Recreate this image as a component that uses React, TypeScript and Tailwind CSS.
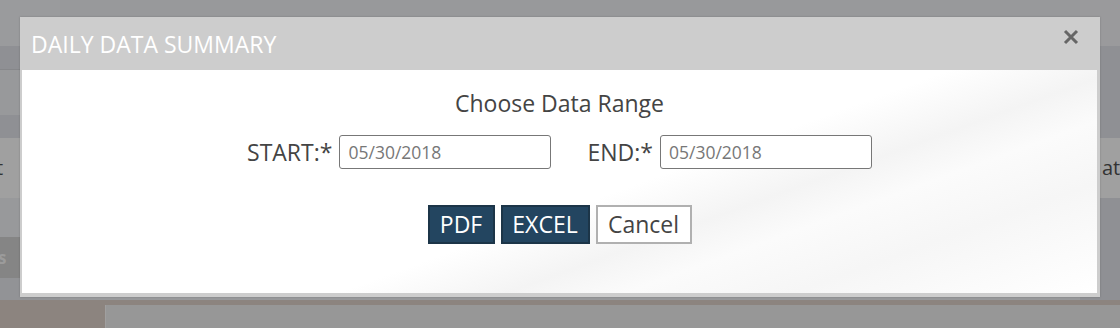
import React from "react";

export default function App() {
  const font = { fontFamily: '"Open Sans", "Noto Sans", sans-serif' };
  return (
    <div className="relative w-[1120px] h-[328px] overflow-hidden bg-[#98999b]" style={font}>
      {/* background page under overlay */}
      <div className="flex flex-col w-full h-full">
        <div className="flex w-full h-[300px]">
          <div className="flex flex-col w-[60px] h-full">
            <div className="h-[46px] bg-[#9a9b9d]" />
            <div className="h-[24px] bg-[#8f9094] border-b border-[#86878a]" />
            <div className="h-[45px] bg-[#98999b]" />
            <div className="h-[23px] bg-[#8f9094]" />
            <div className="h-[60px] bg-[#a0a0a0] flex items-center text-[20px] leading-none text-[#333]">
              <span className="-ml-[4px]">t</span>
            </div>
            <div className="h-[39px] bg-[#98999b]" />
            <div className="h-[41px] bg-[#858585] flex items-center text-[17px] leading-none font-bold text-[#9b9b9b]">
              <span className="-ml-[2px]">s</span>
            </div>
            <div className="flex-1 bg-[#929396]" />
          </div>
          <div className="flex-1 h-full bg-[#98999b]" />
          <div className="flex flex-col w-[40px] h-full">
            <div className="h-[46px] bg-[#9a9a9c]" />
            <div className="h-[92px] bg-[#8f9094]" />
            <div className="h-[60px] bg-[#a0a0a0] flex items-center text-[20px] leading-none text-[#333]">
              <span className="pl-[22px]">at</span>
            </div>
            <div className="flex-1 bg-[#8f9094]" />
          </div>
        </div>
        <div className="h-[5px] bg-[#8c847f]" />
        <div className="flex flex-1">
          <div className="w-[105px] bg-[#8c847f]" />
          <div className="flex-1 bg-[#979797] border-l border-[#a09f9f]" />
        </div>
      </div>

      {/* modal */}
      <div className="absolute left-[20px] top-[17px] w-[1080px] h-[280px] bg-[#cdcdcd] flex flex-col shadow-[0_0_2px_rgba(0,0,0,0.2)]">
        <div className="h-[53px] flex items-center justify-between pl-[11px] pr-[21px]">
          <span className="text-white text-[23px] leading-none mt-[1px]">DAILY DATA SUMMARY</span>
          <svg width="16" height="16" viewBox="0 0 16 16" className="mt-[-14px]">
            <path d="M2 2 L14 14 M14 2 L2 14" stroke="#666" strokeWidth="3" strokeLinecap="butt" />
          </svg>
        </div>
        <div
          className="ml-[2px] mr-[3px] h-[223px] flex flex-col items-center"
          style={{
            background:
              "linear-gradient(160deg, #ffffff 0%, #ffffff 55%, #f4f4f4 65%, #fbfbfb 72%, #f6f6f6 82%, #ffffff 100%)",
          }}
        >
          <div className="mt-[19px] text-[23px] leading-[28px] text-[#444]">Choose Data Range</div>
          <div className="mt-[18px] flex items-center">
            <span className="text-[23px] leading-none text-[#444] mr-[7px]">START:*</span>
            <div className="w-[212px] h-[34px] border border-[#777] rounded-[3px] bg-white flex items-center pl-[8px] pt-[2px] text-[17.5px] leading-none text-[#777]">
              05/30/2018
            </div>
            <span className="ml-[36px] text-[23px] leading-none text-[#444] mr-[7px]">END:*</span>
            <div className="w-[212px] h-[34px] border border-[#777] rounded-[3px] bg-white flex items-center pl-[8px] pt-[2px] text-[17.5px] leading-none text-[#777]">
              05/30/2018
            </div>
          </div>
          <div className="mt-[36px] flex items-center gap-[6px]">
            <div className="h-[39px] w-[67px] bg-[#234560] border-2 border-[#1c3548] flex items-center justify-center text-white text-[23px] leading-none">
              PDF
            </div>
            <div className="h-[39px] w-[89px] bg-[#234560] border-2 border-[#1c3548] flex items-center justify-center text-white text-[23px] leading-none">
              EXCEL
            </div>
            <div className="h-[39px] w-[96px] bg-white border-2 border-[#b0b0b0] flex items-center justify-center text-[#444] text-[23px] leading-none">
              Cancel
            </div>
          </div>
        </div>
      </div>
    </div>
  );
}
